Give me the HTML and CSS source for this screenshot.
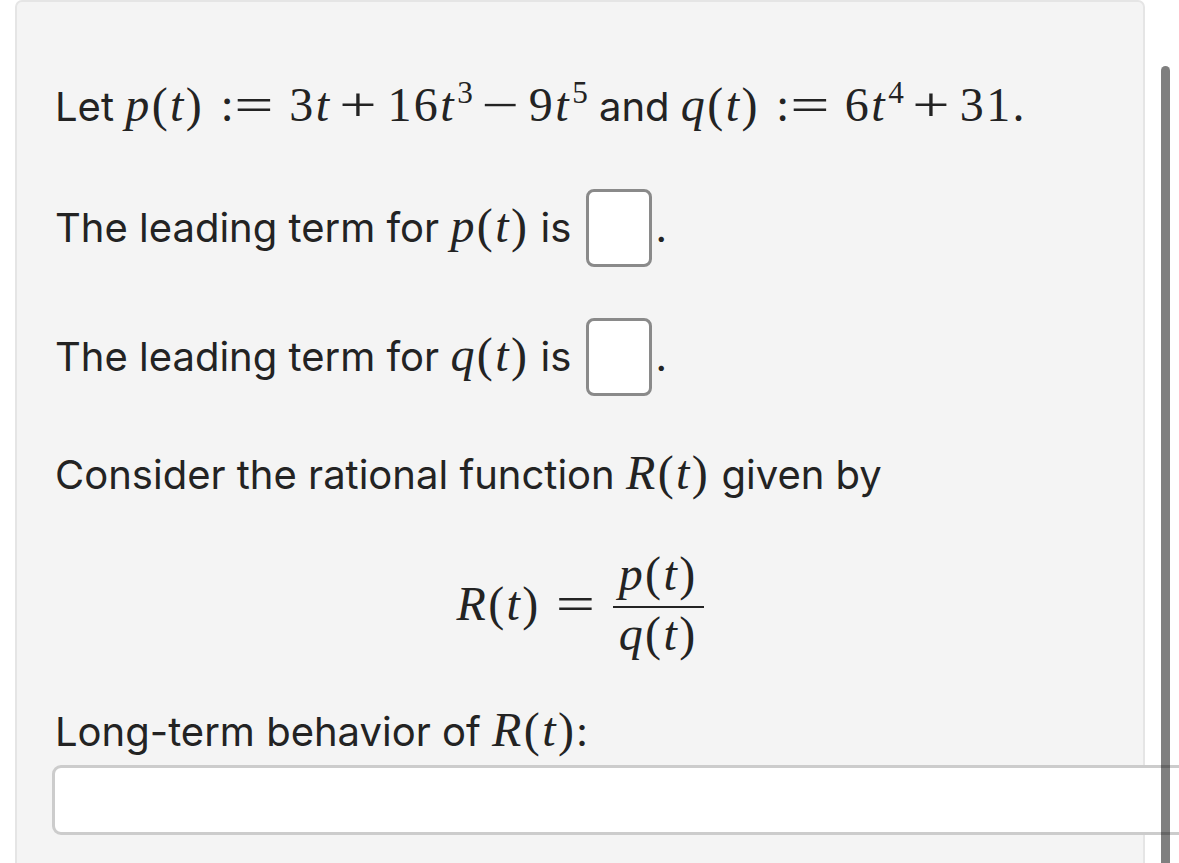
FILE: index.html
```html
<!DOCTYPE html>
<html lang="en">
<head>
<meta charset="utf-8">
<title>Leading terms</title>
<link rel="stylesheet" href="styles.css">
</head>
<body>
<div class="card">
  <p class="line l1">Let <span class="m"><i>p</i>(<i>t</i>)<span class="rel"><span class="colon">:</span><span class="eq">=</span></span>3<i>t</i><span class="bin">+</span>16<i>t</i><sup>3</sup><span class="bin">−</span>9<i>t</i><sup>5</sup></span> and <span class="m"><i>q</i>(<i>t</i>)<span class="rel"><span class="colon">:</span><span class="eq">=</span></span>6<i>t</i><sup>4</sup><span class="bin">+</span>31.</span></p>

  <p class="line l2">The leading term for <span class="m"><i>p</i>(<i>t</i>)</span> is<span class="blank"></span>.</p>

  <p class="line l3">The leading term for <span class="m"><i>q</i>(<i>t</i>)</span> is<span class="blank"></span>.</p>

  <p class="line l4">Consider the rational function <span class="m"><i>R</i>(<i>t</i>)</span> given by</p>

  <div class="display m">
    <span class="lhs"><i>R</i>(<i>t</i>)</span>
    <span class="deq">=</span>
    <span class="frac">
      <span class="num"><i>p</i>(<i>t</i>)</span>
      <span class="bar"></span>
      <span class="den"><i>q</i>(<i>t</i>)</span>
    </span>
  </div>

  <p class="line l5">Long-term behavior of <span class="m"><i>R</i>(<i>t</i>)</span>:</p>

  <div class="answer"></div>
</div>
<div class="scrollbar"></div>
</body>
</html>
```

FILE: styles.css
```css
html, body {
  margin: 0;
  padding: 0;
  overflow: hidden;
  background: #ffffff;
}

body {
  font-family: Inter, "Noto Sans", sans-serif;
  font-size: 40px;
  color: #232323;
}

.card {
  margin-left: 15px;
  width: 1130px;
  min-height: 920px;
  box-sizing: border-box;
  border: 2px solid #e5e5e5;
  border-radius: 7px;
  background: #f4f4f4;
  padding: 73px 38px 80px;
}

.line {
  margin: 0;
  line-height: 60px;
  white-space: nowrap;
}

.l2 { margin-top: 52px; }
.l3 { margin-top: 51px; }
.l4 { margin-top: 47px; }
.l5 { margin-top: 42px; }

/* math */
.m {
  font-family: "Liberation Serif", "DejaVu Serif", serif;
  font-size: 48px;
  letter-spacing: 0.05em;
}

.m i {
  font-style: italic;
}

.m sup {
  font-size: 0.65em;
  line-height: 0;
  vertical-align: 0.58em;
  margin-left: 0.04em;
  letter-spacing: 0;
}

.rel {
  display: inline-block;
  margin: 0 15px 0 16px;
  letter-spacing: 0;
}

.colon {
  display: inline-block;
  width: 14px;
  text-align: center;
}

.eq {
  display: inline-block;
  width: 40px;
  text-align: center;
  transform: scaleX(1.45);
}

.bin {
  display: inline-block;
  width: 36px;
  margin: 0 11px 0 9px;
  text-align: center;
  letter-spacing: 0;
  transform: scaleX(1.38);
}

.blank {
  display: inline-block;
  box-sizing: border-box;
  width: 66px;
  height: 78px;
  margin-left: 15px;
  margin-right: 3px;
  border: 3px solid #8a8a8a;
  border-radius: 8px;
  background: #ffffff;
  vertical-align: -25px;
}

/* display equation */
.display {
  display: flex;
  justify-content: center;
  align-items: center;
  margin-top: 45px;
  line-height: 48px;
}

.deq {
  display: inline-block;
  width: 39px;
  margin: 0 18px 0 15px;
  text-align: center;
  letter-spacing: 0;
  transform: scaleX(1.45);
}

.frac {
  display: flex;
  flex-direction: column;
  align-items: center;
}

.num {
  padding: 0 6px 8px;
}

.bar {
  align-self: stretch;
  height: 2px;
  background: #232323;
}

.den {
  padding: 2px 6px 0;
}

.answer {
  margin-top: 3px;
  margin-left: -3px;
  width: 1200px;
  height: 70px;
  box-sizing: border-box;
  border: 3px solid #cccccc;
  border-radius: 9px;
  background: #ffffff;
}

.scrollbar {
  position: fixed;
  left: 1161px;
  top: 66px;
  width: 9px;
  bottom: 0;
  border-radius: 5px 5px 0 0;
  background: rgba(0, 0, 0, 0.5);
}
```
